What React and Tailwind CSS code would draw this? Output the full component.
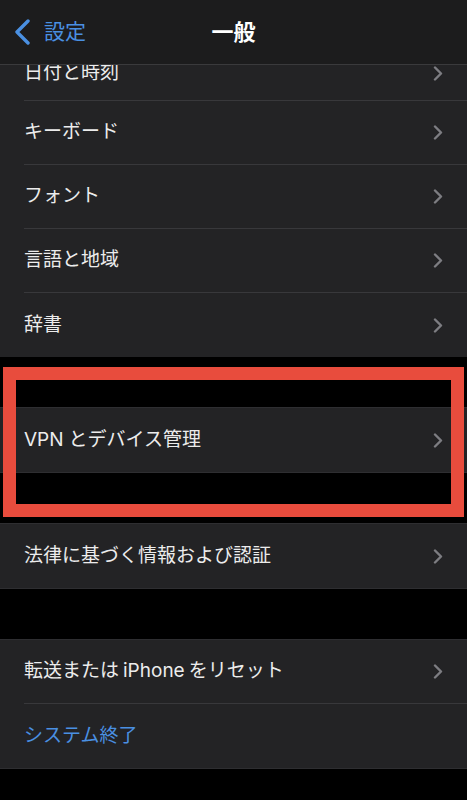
import React from 'react';

const font = { fontFamily: '"Inter", "Noto Sans CJK JP", sans-serif' };

const Chevron = () => (
    <svg width="10" height="15" viewBox="0 0 10 15" fill="none" className="shrink-0">
        <path d="M2 1.5l6 6-6 6" stroke="#7d7d82" strokeWidth="2.4" strokeLinecap="round" strokeLinejoin="round" />
    </svg>
);

const Row = ({ children, last, blue, noChevron }) => (
    <div className="h-[64px] bg-[#232325] pl-6 flex">
        <div className={`flex-1 flex items-center justify-between pr-6 ${last ? '' : 'border-b border-[#38383b]'}`}>
            <span className={`text-[19px] ${blue ? 'text-[#4a90e2]' : 'text-[#ececec]'}`}>{children}</span>
            {!noChevron && <Chevron />}
        </div>
    </div>
);

const Gap = () => <div className="h-[50px] bg-black" />;

export default function App() {
    return (
        <div className="relative w-[467px] h-[800px] bg-black overflow-hidden" style={font}>
            {/* Nav bar */}
            <div className="relative z-10 h-[65px] bg-[#1c1c1d] border-b border-[#3a3a3c] flex items-center">
                <div className="flex items-center pl-[13px] gap-[13px] text-[#4a90e2]">
                    <svg width="18" height="26" viewBox="0 0 18 26" fill="none">
                        <path d="M15 2L4 13l11 11" stroke="#4a90e2" strokeWidth="3.4" strokeLinecap="round" strokeLinejoin="round" />
                    </svg>
                    <span className="text-[21px]">設定</span>
                </div>
                <div className="absolute inset-x-0 top-0 h-[64px] flex items-center justify-center pointer-events-none">
                    <span className="text-[22px] font-bold text-white">一般</span>
                </div>
            </div>

            {/* Partially scrolled row, tucked under the nav bar */}
            <div className="h-[36px] bg-[#232325] pl-6 flex">
                <div className="flex-1 flex items-center justify-between pr-6 border-b border-[#38383b]">
                    <span className="text-[19px] text-[#ececec] -mt-[19px] leading-[28px]">日付と時刻</span>
                    <div className="-mt-[18px]"><Chevron /></div>
                </div>
            </div>
            <Row>キーボード</Row>
            <Row>フォント</Row>
            <Row>言語と地域</Row>
            <Row last>辞書</Row>

            <Gap />
            <div className="border-y border-[#2e2e31]">
                <Row last>VPN<span className="ml-[5px]">とデバイス管理</span></Row>
            </div>
            <Gap />
            <div className="border-y border-[#2e2e31]">
                <Row last>法律に基づく情報および認証</Row>
            </div>
            <Gap />
            <div className="border-y border-[#2e2e31]">
                <Row>転送または<span className="mx-[4px]">iPhone</span>をリセット</Row>
                <Row blue noChevron last>システム終了</Row>
            </div>

            {/* Annotation box */}
            <div className="absolute left-[3px] top-[367px] w-[461px] h-[150px] border-[13px] border-[#e84c3d] pointer-events-none" />
        </div>
    );
}
